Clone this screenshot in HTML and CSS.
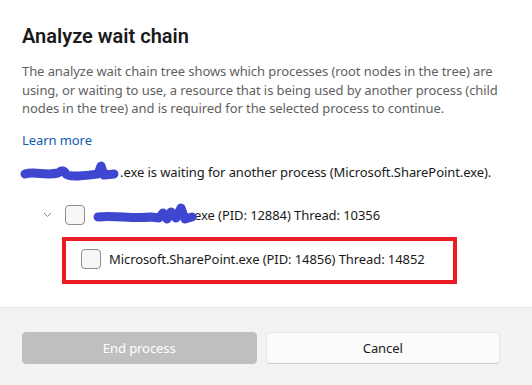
FILE: index.html
```html
<!DOCTYPE html>
<html>
    <head>
        <meta charset="utf-8">
        <title>Analyze wait chain</title>
        <link rel="stylesheet" href="styles.css">
    </head>
    <body>
        <div class="dialog">
            <div class="content">
                <h1>Analyze wait chain</h1>
                <p class="desc">The analyze wait chain tree shows which processes (root nodes in the tree) are using, or waiting to use, a resource that is being used by another process (child nodes in the tree) and is required for the selected process to continue.</p>
                <a class="learn" href="#">Learn more</a>
                <p class="summary"><span class="redact redact-a"><svg width="98" height="22" viewBox="0 0 98 22"><path d="M5 13 C 15 10, 25 15, 38 12 C 42 9, 44 9, 46 13 S 70 14, 78 13 L 81 5 L 84 14 L 94 13"/></svg></span>.exe is waiting for another process (Microsoft.SharePoint.exe).</p>

                <div class="row row-parent">
                    <svg class="chevron" width="9" height="6" viewBox="0 0 9 6"><polyline points="1,1 4.5,4.5 8,1"/></svg>
                    <span class="check"></span>
                    <span class="label"><span class="redact redact-b"><svg width="104" height="24" viewBox="0 0 104 24"><path d="M5 13 C 20 11, 40 15, 58 13 L 66 14 L 70 9 L 74 15 L 78 8 L 83 14 L 88 4 L 92 15 L 99 13"/></svg></span>exe (PID: 12884) Thread: 10356</span>
                </div>

                <div class="highlight">
                    <div class="row row-child">
                        <span class="check"></span>
                        <span class="label">Microsoft.SharePoint.exe (PID: 14856) Thread: 14852</span>
                    </div>
                </div>
            </div>
            <div class="footer">
                <button class="btn btn-primary" disabled>End process</button>
                <button class="btn">Cancel</button>
            </div>
        </div>
    </body>
</html>
```

FILE: styles.css
```css
*, ::after, ::before {
    box-sizing: border-box;
}
body {
    margin: 0;
    background: #fff;
    font-family: "Noto Sans", "Open Sans", sans-serif;
    font-size: 13px;
    letter-spacing: -0.08px;
    color: #1a1a1a;
}
.dialog {
    width: 532px;
    height: 385px;
    display: flex;
    flex-direction: column;
}
.content {
    height: 307px;
    padding: 22px 28px 0px 22px;
}
h1 {
    margin: 0;
    font-family: Roboto, "Noto Sans", sans-serif;
    font-size: 20px;
    line-height: 28px;
    font-weight: 600;
    letter-spacing: 0;
    color: #1a1a1a;
}
.desc {
    margin: 12px 0px 0px 0px;
    line-height: 18.6px;
    color: #5f5f5f;
}
.learn {
    display: block;
    margin: 13px 0px 0px 0px;
    line-height: 18.6px;
    color: #0f5cb0;
    text-decoration: none;
    width: max-content;
}
.summary {
    margin: 14px 0px 0px 0px;
    line-height: 18.6px;
    white-space: nowrap;
}
.redact {
    display: inline-block;
    position: relative;
    height: 1em;
    vertical-align: middle;
}
.redact svg {
    position: absolute;
    overflow: visible;
}
.redact path {
    fill: none;
    stroke: #3f47d0;
    stroke-width: 9;
    stroke-linecap: round;
    stroke-linejoin: round;
}
.redact-a {
    width: 98px;
}
.redact-a svg {
    left: -2px;
    top: -6px;
}
.redact-b {
    width: 101px;
}
.redact-b svg {
    left: 0px;
    top: -6px;
}
.row {
    display: flex;
    align-items: center;
    height: 32px;
    white-space: nowrap;
}
.row-parent {
    margin: 17px 0px 0px 21px;
}
.chevron {
    margin-right: 13px;
}
.chevron polyline {
    fill: none;
    stroke: #8a8a8a;
    stroke-width: 1;
}
.check {
    width: 20px;
    height: 20px;
    border: 1px solid #8f8f8f;
    border-radius: 4px;
    background: #f7f7f7;
    margin-right: 8px;
    flex-shrink: 0;
}
.highlight {
    margin: 6px 0px 0px 40px;
    width: 395px;
    height: 47px;
    border: 4px solid #ed1c24;
    display: flex;
    align-items: center;
    padding: 0px 0px 2px 15px;
}
.footer {
    flex: 1;
    background: #f3f3f3;
    border-top: 1px solid #e5e5e5;
    padding: 24px 32px 0px 22px;
    display: grid;
    grid-template-columns: 1fr 1fr;
    gap: 9px;
    align-content: start;
}
.btn {
    height: 32px;
    border-radius: 4px;
    font-family: inherit;
    font-size: 13px;
    letter-spacing: -0.08px;
    color: #1a1a1a;
    background: #fbfbfb;
    border: 1px solid #e5e5e5;
    border-bottom-color: #cccccc;
}
.btn-primary {
    background: #bfbfbf;
    border-color: #bfbfbf;
    color: #fff;
}
```
